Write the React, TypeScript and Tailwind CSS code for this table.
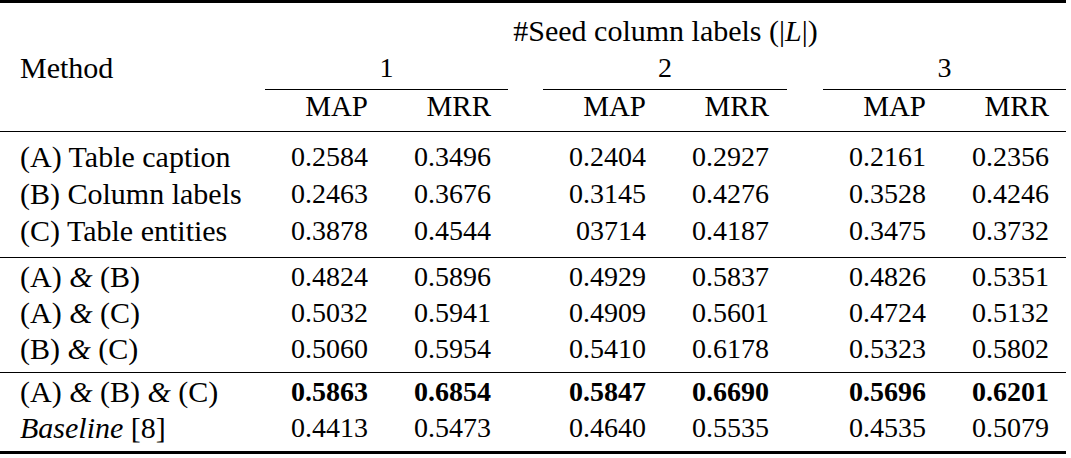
import React from 'react';

type Row = { label: React.ReactNode; vals: string[]; bold?: boolean };

const GROUP_CLS = ['w-[243px]', 'ml-[35px] w-[244px]', 'ml-[36px] w-[243px]'];

const amp = <span className="italic">&amp;</span>;

const single: Row[] = [
  { label: '(A) Table caption', vals: ['0.2584', '0.3496', '0.2404', '0.2927', '0.2161', '0.2356'] },
  { label: '(B) Column labels', vals: ['0.2463', '0.3676', '0.3145', '0.4276', '0.3528', '0.4246'] },
  { label: '(C) Table entities', vals: ['0.3878', '0.4544', '03714', '0.4187', '0.3475', '0.3732'] },
];

const pairs: Row[] = [
  { label: <>(A) {amp} (B)</>, vals: ['0.4824', '0.5896', '0.4929', '0.5837', '0.4826', '0.5351'] },
  { label: <>(A) {amp} (C)</>, vals: ['0.5032', '0.5941', '0.4909', '0.5601', '0.4724', '0.5132'] },
  { label: <>(B) {amp} (C)</>, vals: ['0.5060', '0.5954', '0.5410', '0.6178', '0.5323', '0.5802'] },
];

const final: Row[] = [
  {
    label: <>(A) {amp} (B) {amp} (C)</>,
    vals: ['0.5863', '0.6854', '0.5847', '0.6690', '0.5696', '0.6201'],
    bold: true,
  },
  {
    label: <><span className="italic">Baseline</span> [8]</>,
    vals: ['0.4413', '0.5473', '0.4640', '0.5535', '0.4535', '0.5079'],
  },
];

function DataRow({ label, vals, bold, tall }: Row & { tall?: boolean }) {
  return (
    <div className={`flex ${tall ? 'h-[37px]' : 'h-[36px]'} items-start leading-[28px]`}>
      <div className="w-[265px] pl-[20px] text-[30px] whitespace-nowrap">{label}</div>
      {[0, 1, 2].map((g) => (
        <div key={g} className={`${GROUP_CLS[g]} flex text-[28px] ${bold ? 'font-bold' : ''}`}>
          <div className="w-[103px] text-right">{vals[g * 2]}</div>
          <div className="w-[123px] text-right">{vals[g * 2 + 1]}</div>
        </div>
      ))}
    </div>
  );
}

export default function App() {
  return (
    <div className="w-[1071px] h-[458px] bg-white text-black [font-family:Liberation_Serif,DejaVu_Serif,serif]">
      <div className="w-[1066px]">
        {/* top rule */}
        <div className="h-[3px] bg-black" />

        {/* header */}
        <div className="pt-[14px]">
          <div className="flex h-[37px] items-start leading-[28px]">
            <div className="w-[265px]" />
            <div className="w-[801px] text-center text-[30px] whitespace-nowrap">
              #Seed column labels (|<span className="italic">L</span>|)
            </div>
          </div>
          <div className="flex h-[35px] items-start leading-[28px]">
            <div className="w-[265px] pl-[20px] text-[30px]">Method</div>
            {['1', '2', '3'].map((n, g) => (
              <div key={n} className={`${GROUP_CLS[g]} text-center text-[28px]`}>
                {n}
              </div>
            ))}
          </div>
          <div className="flex h-px">
            <div className="w-[265px]" />
            {[0, 1, 2].map((g) => (
              <div key={g} className={`${GROUP_CLS[g]} h-px bg-black`} />
            ))}
          </div>
          <div className="flex h-[41px] items-start pt-[2px] leading-[28px]">
            <div className="w-[265px]" />
            {[0, 1, 2].map((g) => (
              <div key={g} className={`${GROUP_CLS[g]} flex text-[29px]`}>
                <div className="w-[103px] text-right">MAP</div>
                <div className="w-[123px] text-right">MRR</div>
              </div>
            ))}
          </div>
        </div>
        <div className="h-px bg-black" />

        {/* single sources */}
        <div className="pt-[11px] pb-[3px] border-b border-black">
          {single.map((r, i) => (
            <DataRow key={i} tall {...r} />
          ))}
        </div>

        {/* combinations of two */}
        <div className="pt-[5px] pb-[1px] border-b border-black">
          {pairs.map((r, i) => (
            <DataRow key={i} {...r} />
          ))}
        </div>

        {/* all + baseline */}
        <div className="pt-[5px] pb-[1px] border-b-[3px] border-black">
          {final.map((r, i) => (
            <DataRow key={i} {...r} />
          ))}
        </div>
      </div>
    </div>
  );
}
